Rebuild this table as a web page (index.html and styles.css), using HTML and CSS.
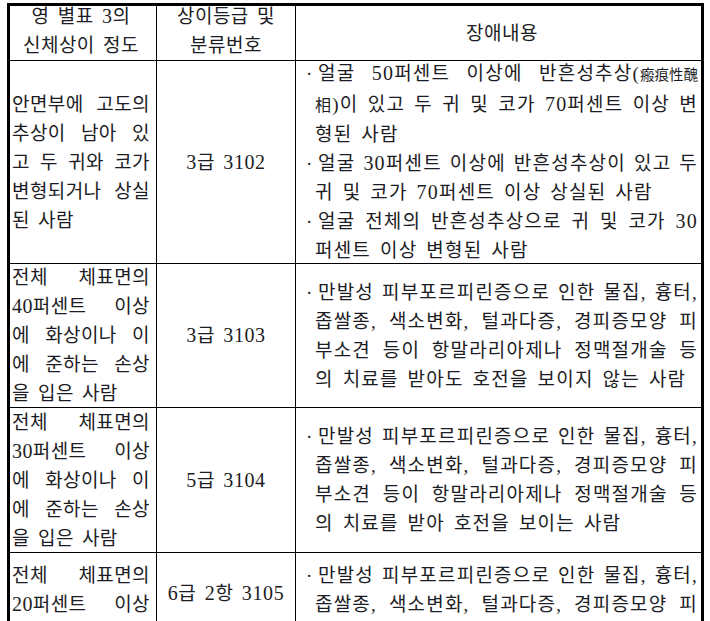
FILE: index.html
```html
<!DOCTYPE html>
<html lang="ko">
<head>
<meta charset="utf-8">
<title>장애내용</title>
<link rel="stylesheet" href="styles.css">
</head>
<body>
<div class="tbl">
  <div class="cell head c1"><div class="hd-lines"><div>영 별표 <span class="n">3</span>의</div><div>신체상이 정도</div></div></div>
  <div class="cell head c2"><div class="hd-lines"><div>상이등급 및</div><div>분류번호</div></div></div>
  <div class="cell head c3"><div>장애내용</div></div>

  <div class="cell c1">
    <div class="j">안면부에 고도의</div>
    <div class="j">추상이 남아 있</div>
    <div class="j">고 두 귀와 코가</div>
    <div class="j">변형되거나 상실</div>
    <div>된 사람</div>
  </div>
  <div class="cell c2"><div><span class="n">3</span>급 <span class="n">3102</span></div></div>
  <div class="cell c3">
    <div class="j"><span class="b">·</span>얼굴 <span class="n">50</span>퍼센트 이상에 반흔성추상<span class="nb">(<span class="hj">瘢痕性醜</span></span></div>
    <div class="j ind"><span class="nb"><span class="hj2">相</span>)</span>이 있고 두 귀 및 코가 <span class="n">70</span>퍼센트 이상 변</div>
    <div class="ind">형된 사람</div>
    <div class="j"><span class="b">·</span>얼굴 <span class="n">30</span>퍼센트 이상에 반흔성추상이 있고 두</div>
    <div class="ind">귀 및 코가 <span class="n">70</span>퍼센트 이상 상실된 사람</div>
    <div class="j"><span class="b">·</span>얼굴 전체의 반흔성추상으로 귀 및 코가 <span class="n">30</span></div>
    <div class="ind">퍼센트 이상 변형된 사람</div>
  </div>

  <div class="cell c1">
    <div class="j">전체 체표면의</div>
    <div class="j"><span class="n">40</span>퍼센트 이상</div>
    <div class="j">에 화상이나 이</div>
    <div class="j">에 준하는 손상</div>
    <div>을 입은 사람</div>
  </div>
  <div class="cell c2"><div><span class="n">3</span>급 <span class="n">3103</span></div></div>
  <div class="cell c3">
    <div class="j"><span class="b">·</span>만발성 피부포르피린증으로 인한 물집, 흉터,</div>
    <div class="j ind">좁쌀종, 색소변화, 털과다증, 경피증모양 피</div>
    <div class="j ind">부소견 등이 항말라리아제나 정맥절개술 등</div>
    <div class="ind">의 치료를 받아도 호전을 보이지 않는 사람</div>
  </div>

  <div class="cell c1">
    <div class="j">전체 체표면의</div>
    <div class="j"><span class="n">30</span>퍼센트 이상</div>
    <div class="j">에 화상이나 이</div>
    <div class="j">에 준하는 손상</div>
    <div>을 입은 사람</div>
  </div>
  <div class="cell c2"><div><span class="n">5</span>급 <span class="n">3104</span></div></div>
  <div class="cell c3">
    <div class="j"><span class="b">·</span>만발성 피부포르피린증으로 인한 물집, 흉터,</div>
    <div class="j ind">좁쌀종, 색소변화, 털과다증, 경피증모양 피</div>
    <div class="j ind">부소견 등이 항말라리아제나 정맥절개술 등</div>
    <div class="ind">의 치료를 받아 호전을 보이는 사람</div>
  </div>

  <div class="cell c1 last">
    <div class="j">전체 체표면의</div>
    <div class="j"><span class="n">20</span>퍼센트 이상</div>
  </div>
  <div class="cell c2 last2"><div><span class="n">6</span>급 <span class="n">2</span>항 <span class="n">3105</span></div></div>
  <div class="cell c3 last">
    <div class="j"><span class="b">·</span>만발성 피부포르피린증으로 인한 물집, 흉터,</div>
    <div class="j ind">좁쌀종, 색소변화, 털과다증, 경피증모양 피</div>
  </div>
</div>
</body>
</html>
```
FILE: styles.css
```css
html, body {
  margin: 0;
  padding: 0;
  background: #fff;
}
body {
  height: 621px;
  overflow: hidden;
  font-family: "Liberation Serif", "Noto Sans CJK KR", serif;
  font-size: 19px;
  line-height: 29px;
  color: #1c1c24;
  letter-spacing: 1.2px;
  word-spacing: 3px;
}
.tbl {
  display: grid;
  grid-template-columns: 146px 138px 405px;
  grid-template-rows: 54px 202px 143px 144px 68px;
  gap: 1px;
  background: #000;
  border: 3px solid #000;
  border-bottom: none;
  width: max-content;
  margin: 3px 0 0 7px;
}
.cell {
  background: #fff;
  display: flex;
  flex-direction: column;
  justify-content: center;
  white-space: nowrap;
}
.c1 {
  padding: 0 6px 0 2px;
  letter-spacing: 0.4px;
}
.c2 {
  align-items: center;
  text-align: center;
  letter-spacing: 0.6px;
}
.c3 {
  padding: 0 3px 0 10px;
}
.head {
  align-items: center;
  text-align: center;
  letter-spacing: 0.5px;
}
.hd-lines {
  margin-top: -5px;
}
.n {
  font-size: 20px;
}
.j {
  text-align: justify;
  text-align-last: justify;
  word-spacing: 0;
}
.ind {
  padding-left: 9px;
}
.b {
  display: inline-block;
  width: 12px;
  letter-spacing: 0;
}
.nb {
  display: inline-block;
}
.hj {
  font-size: 14.5px;
  letter-spacing: 0;
}
.hj2 {
  font-size: 16px;
}
.last {
  justify-content: flex-start;
  padding-top: 8px;
}
.last2 {
  justify-content: flex-start;
  padding-top: 26px;
}
```
